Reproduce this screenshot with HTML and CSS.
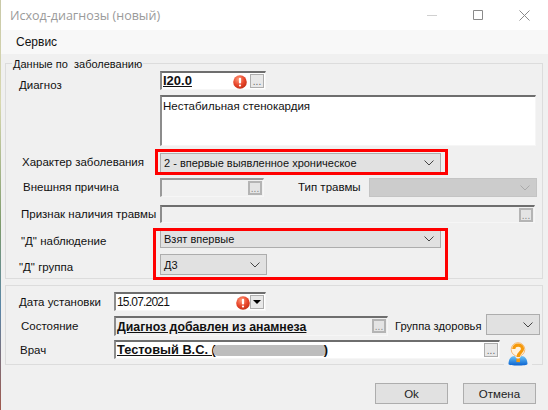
FILE: index.html
```html
<!DOCTYPE html>
<html lang="ru">
<head>
  <meta charset="UTF-8">
  <title>Исход-диагнозы (новый)</title>
  <link rel="stylesheet" href="styles.css">
</head>
<body>
  <div class="window">
    <div class="titlebar">
      <span class="title">Исход-диагнозы (новый)</span>
      <div class="win-btns">
        <svg width="11" height="11" viewBox="0 0 11 11"><path d="M0 5.500H10" stroke="#d0d0d0" fill="none"/></svg>
        <svg width="11" height="11" viewBox="0 0 11 11"><path d="M.5 .5H9.500V9.500H.5Z" stroke="#8a8a8a" fill="none"/></svg>
        <svg width="11" height="11" viewBox="0 0 11 11"><path d="M.5 .5L10.500 10.500M10.500 .5L.5 10.500" stroke="#8a8a8a" fill="none"/></svg>
      </div>
    </div>
    <div class="menubar"><span>Сервис</span></div>

    <div class="content">
      <section class="group group-main">
        <span class="legend">Данные по&nbsp; заболеванию</span>

        <div class="row row-diag">
          <label class="lbl lbl-diag">Диагноз</label>
          <div class="input input-code">
            <b class="val val-code">I20.0</b>
            <svg class="err" viewBox="0 0 14 14"><use href="#err-icon"/></svg>
            <span class="dots">...</span>
          </div>
        </div>

        <div class="row row-note">
          <div class="input input-note">Нестабильная стенокардия</div>
        </div>

        <div class="row row-kind">
          <label class="lbl lbl-kind">Характер заболевания</label>
          <div class="select select-kind">
            <span>2 - впервые выявленное хроническое</span>
            <svg class="chev" viewBox="0 0 10 6"><path d="M.5 .5L5 5L9.500 .5" fill="none" stroke="#444"/></svg>
          </div>
        </div>

        <div class="row row-ext">
          <label class="lbl lbl-ext">Внешняя причина</label>
          <div class="input input-ext is-off"><span class="dots dots-off">...</span></div>
          <label class="lbl lbl-trauma">Тип травмы</label>
          <div class="select select-trauma">
            <svg class="chev" viewBox="0 0 10 6"><path d="M.5 .5L5 5L9.500 .5" fill="none" stroke="#aaa"/></svg>
          </div>
        </div>

        <div class="row row-sign">
          <label class="lbl lbl-sign">Признак наличия травмы</label>
          <div class="input input-sign is-off"><span class="dots dots-off">...</span></div>
        </div>

        <div class="row row-obs">
          <label class="lbl lbl-obs">"Д" наблюдение</label>
          <div class="select select-obs">
            <span>Взят впервые</span>
            <svg class="chev" viewBox="0 0 10 6"><path d="M.5 .5L5 5L9.500 .5" fill="none" stroke="#444"/></svg>
          </div>
        </div>

        <div class="row row-grp">
          <label class="lbl lbl-grp">"Д" группа</label>
          <div class="select select-grp">
            <span>Д3</span>
            <svg class="chev" viewBox="0 0 10 6"><path d="M.5 .5L5 5L9.500 .5" fill="none" stroke="#444"/></svg>
          </div>
        </div>

        <div class="mark mark-one"></div>
        <div class="mark mark-two"></div>
      </section>

      <section class="group group-state">
        <div class="row row-date">
          <label class="lbl lbl-date">Дата установки</label>
          <div class="input input-date">
            <span class="val val-date">15.07.2021</span>
            <svg class="err" viewBox="0 0 14 14"><use href="#err-icon"/></svg>
            <span class="dots dots-arrow"><i></i></span>
          </div>
        </div>

        <div class="row row-state">
          <label class="lbl lbl-state">Состояние</label>
          <div class="input input-state is-off">
            <b class="val val-bold">Диагноз добавлен из анамнеза</b>
            <span class="dots dots-off">...</span>
          </div>
          <label class="lbl lbl-health">Группа здоровья</label>
          <div class="select select-health">
            <svg class="chev" viewBox="0 0 10 6"><path d="M.5 .5L5 5L9.500 .5" fill="none" stroke="#444"/></svg>
          </div>
        </div>

        <div class="row row-doc">
          <label class="lbl lbl-doc">Врач</label>
          <div class="input input-doc">
            <b class="val val-bold val-doc">Тестовый В.С. (<span class="blur"></span>)</b>
            <span class="dots">...</span>
          </div>
        </div>

        <svg class="help" viewBox="0 0 20 24">
          <defs>
            <linearGradient id="help-body" x1="0" y1="0" x2="0" y2="1">
              <stop offset="0" stop-color="#6cc4f8"/>
              <stop offset="1" stop-color="#0a62d0"/>
            </linearGradient>
          </defs>
          <circle cx="10" cy="7.500" r="6.800" fill="#fff3e0" stroke="#f5b974"/>
          <path d="M.5 22C.5 17 3 14 6.500 14L10 18L13.500 14C17 14 19.500 17 19.500 22C19.500 24 .5 24 .5 22Z" fill="url(#help-body)"/>
          <path d="M5.800 7C5.800 1.800 14.500 1.800 14.500 7C14.500 10.500 10.200 10 10.200 15" fill="none" stroke="#f59a0c" stroke-width="3.200"/>
          <rect x="8.400" y="16.500" width="3.600" height="3.600" fill="#f59a0c"/>
        </svg>
      </section>

      <div class="actions">
        <button class="btn">Ok</button>
        <button class="btn">Отмена</button>
      </div>
    </div>
  </div>

  <svg class="defs" width="0" height="0">
    <defs>
      <radialGradient id="err-fill" cx=".4" cy=".3" r=".8">
        <stop offset="0" stop-color="#ff9a7a"/>
        <stop offset=".55" stop-color="#e8452a"/>
        <stop offset="1" stop-color="#b92a10"/>
      </radialGradient>
      <g id="err-icon">
        <circle cx="7" cy="7" r="6.800" fill="url(#err-fill)"/>
        <rect x="5.900" y="2.800" width="2.200" height="5.600" rx="1" fill="#fff"/>
        <rect x="5.900" y="9.400" width="2.200" height="2.200" rx="1" fill="#fff"/>
      </g>
    </defs>
  </svg>
</body>
</html>
```

FILE: styles.css
```css
html,body{
  margin: 0;
  height: 100%;
}
body{
  background: linear-gradient(#c9c9a8, #d8d8b0 25%, #7d9a6c 55%, #5a86a8 75%, #a0584c);
  font-family: "Liberation Sans", Arial, sans-serif;
  font-size: 11px;
  color: #111;
  overflow: hidden;
}
.window{
  margin-left: 1px;
  height: 410px;
  background: #f0f0f0;
  display: flex;
  flex-direction: column;
}

/*title + menu*/
.titlebar{
  height: 30px;
  background: #fff;
  display: flex;
  align-items: center;
  justify-content: space-between;
  padding: 0 18px 0 9px;
  flex: none;
}
.title{
  font-family: "Open Sans", sans-serif;
  font-size: 12.500px;
  color: #9a9a9a;
}
.win-btns{
  display: flex;
  gap: 35px;
  height: 11px;
}
.menubar{
  height: 24px;
  background: #f8f8f8;
  padding-left: 15px;
  line-height: 24px;
  flex: none;
  font-size: 12px;
}

.content{
  padding: 9px 5px 0 4px;
  flex: 1;
}

/*group boxes*/
.group{
  position: relative;
  border: 1px solid #dcdcdc;
  padding-left: 154px;
}
.group-main{
  height: 216px;
  box-sizing: border-box;
  padding-top: 7px;
}
.group-state{
  margin-top: 6px;
  height: 80px;
  box-sizing: border-box;
  padding: 6px 0 0 108px;
}
.legend{
  position: absolute;
  top: -7px;
  left: 6px;
  background: #f0f0f0;
  padding: 0 1px;
  font-size: 11px;
  line-height: 14px;
}

/*rows*/
.row{
  display: flex;
  position: relative;
}
.row-diag{ height: 19px; }
.row-note{ height: 51px; margin-top: 5px; }
.row-kind{ height: 20px; margin-top: 7px; }
.row-ext{ height: 19px; margin-top: 5px; }
.row-sign{ height: 18px; margin-top: 8px; }
.row-obs{ height: 18px; margin-top: 7px; }
.row-grp{ height: 21px; margin-top: 6px; }
.row-state{ height: 20px; margin-top: 5px; }
.row-date{ height: 19px; }
.row-doc{ height: 19px; margin-top: 4px; }

.lbl{
  position: absolute;
  white-space: nowrap;
  line-height: 14px;
  font-size: 11.500px;
}
.lbl-diag{ left: -141px; top: 7px; }
.lbl-kind{ left: -138px; top: 2px; }
.lbl-ext{ left: -137px; top: 2px; }
.lbl-trauma{ left: 138px; top: 2px; }
.lbl-sign{ left: -139px; top: 2px; }
.lbl-obs{ left: -139px; top: 4px; }
.lbl-grp{ left: -141px; top: 6px; }
.lbl-date{ left: -95px; top: 3px; }
.lbl-state{ left: -93px; top: 3px; }
.lbl-health{ left: 281px; top: 3px; font-size: 11.200px; }
.lbl-doc{ left: -94px; top: 3px; }

/*sunken inputs*/
.input{
  box-sizing: border-box;
  background: #fff;
  border-style: solid;
  border-width: 2px 1px 1px 2px;
  border-color: #6e6e6e #f6f6f6 #f6f6f6 #8c8c8c;
  display: flex;
  align-items: center;
  position: relative;
  line-height: 14px;
}
.input.is-off{
  background: #f0f0f0;
  justify-content: flex-end;
}
.input-code{ width: 106px; }
.input-note{
  width: 376px;
  height: 51px;
  align-items: flex-start;
  padding: 2px 1px;
  font-size: 11.500px;
}
.input-ext{ width: 104px; border-color: #9a9a9a #f6f6f6 #f6f6f6 #9a9a9a; }
.input-sign{ width: 375px; }
.input-date{ width: 152px; }
.input-state{ width: 274px; justify-content: flex-start !important; }
.input-doc{ width: 386px; }

.val{
  padding-left: 1px;
  white-space: nowrap;
  font-size: 12px;
}
.val-code{
  font-size: 13px;
  text-decoration: underline;
}
.val-date{
  font-size: 12px;
  letter-spacing: -.8px;
}
.val-bold{
  font-size: 12.300px;
  text-decoration: underline;
}
.val-doc{
  font-size: 12.800px;
}
.blur{
  display: inline-block;
  width: 114px;
  height: 11px;
  border-radius: 5px;
  background: #bdbdbd;
  margin: 0 -3px 0 -3px;
  vertical-align: -2px;
}
.err{
  position: absolute;
  right: 15px;
  top: 2px;
  width: 14px;
  height: 14px;
}
.input-code .err{
  right: 18px;
}
.dots{
  position: absolute;
  right: 1px;
  top: 1px;
  box-sizing: border-box;
  width: 14px;
  height: 14px;
  background: #e8e8e8;
  border: 1px solid #adadad;
  color: #666;
  font-size: 10px;
  line-height: 14px;
  text-align: center;
}
.dots-off{
  border: 2px solid #b4b4b4;
  background: #e4e4e4;
  color: #888;
  line-height: 12px;
  overflow: hidden;
}
.dots-arrow{
  display: flex;
  align-items: center;
  justify-content: center;
}
.dots-arrow i{
  border: 4px solid transparent;
  border-top: 4px solid #000;
  border-bottom: 0;
}

/*combo boxes*/
.select{
  box-sizing: border-box;
  background: #e1e1e1;
  border: 1px solid #adadad;
  display: flex;
  align-items: center;
  justify-content: space-between;
  padding: 0 6px 0 3px;
  font-size: 11px;
}
.chev{
  width: 10px;
  height: 6px;
  margin-left: auto;
}
.select-kind, .select-obs{ width: 281px; }
.select-grp{ width: 107px; }
.select-trauma{
  position: absolute;
  left: 209px;
  top: 0;
  width: 168px;
  height: 19px;
  background: #ccc;
  border-color: #c4c4c4;
}
.select-health{
  position: absolute;
  left: 372px;
  top: -2px;
  width: 54px;
  height: 21px;
}

/*red highlight marks*/
.mark{
  position: absolute;
  border: 3px solid #f00;
  box-sizing: border-box;
}
.mark-one{
  left: 149px;
  top: 85px;
  width: 293px;
  height: 26px;
}
.mark-two{
  left: 147px;
  top: 164px;
  width: 295px;
  height: 52px;
}

.help{
  position: absolute;
  right: 10px;
  top: 56px;
  width: 20px;
  height: 24px;
  background: #f0f0f0;
  padding: 0 4px;
}

/*bottom buttons*/
.actions{
  display: flex;
  justify-content: flex-end;
  gap: 15px;
  margin-top: 18px;
  padding-right: 7px;
}
.btn{
  width: 73px;
  height: 21px;
  background: #e1e1e1;
  border: 1px solid #adadad;
  font-family: inherit;
  font-size: 11.500px;
  color: #222;
  padding: 0;
}
.defs{
  position: absolute;
}
```
